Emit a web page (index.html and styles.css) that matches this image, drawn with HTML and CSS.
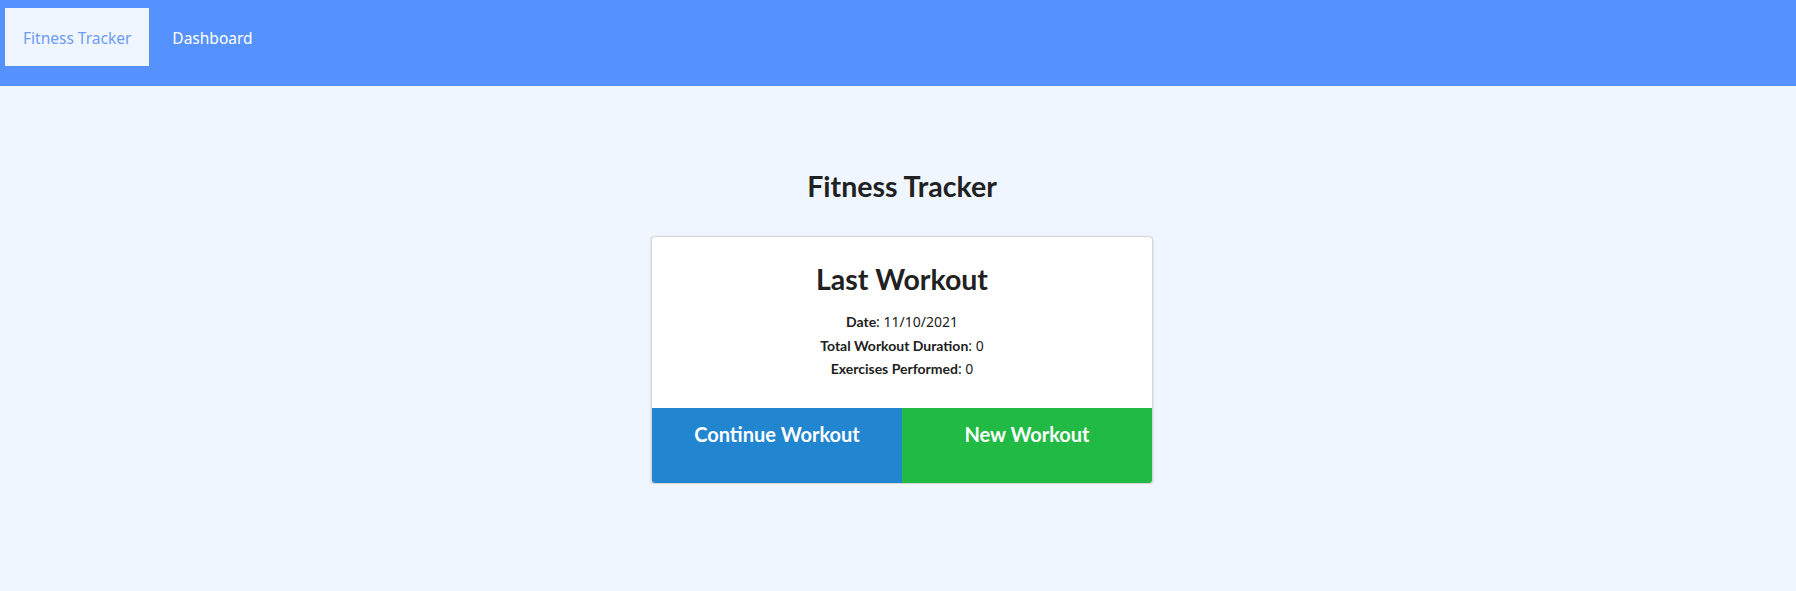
FILE: index.html
```html
<!DOCTYPE html>
<html lang="en">
<head>
<meta charset="utf-8">
<title>Fitness Tracker</title>
<link rel="stylesheet" href="styles.css">
</head>
<body>
<nav class="topnav">
  <a class="nav-link active" href="#">Fitness Tracker</a>
  <a class="nav-link" href="#">Dashboard</a>
</nav>
<main class="main">
  <h1 class="page-title">Fitness Tracker</h1>
  <div class="card">
    <div class="card-body">
      <h2 class="card-title">Last Workout</h2>
      <p class="info"><strong>Date</strong>: 11/10/2021</p>
      <p class="info"><strong>Total Workout Duration</strong>: 0</p>
      <p class="info"><strong>Exercises Performed</strong>: 0</p>
    </div>
    <div class="card-buttons">
      <a class="btn btn-blue" href="#">Continue Workout</a>
      <a class="btn btn-green" href="#">New Workout</a>
    </div>
  </div>
</main>
</body>
</html>
```
FILE: styles.css
```css
html, body {
  margin: 0;
  padding: 0;
}
body {
  background: #eff6ff;
  font-family: "Noto Sans", "Open Sans", sans-serif;
  color: #212121;
}
.topnav {
  background: #5592fe;
  height: 86px;
  box-sizing: border-box;
  padding: 8px 5px 0;
  display: flex;
  align-items: flex-start;
  gap: 5px;
}
.nav-link {
  height: 58px;
  box-sizing: border-box;
  padding: 2px 18px 0;
  display: flex;
  align-items: center;
  font-size: 15.5px;
  color: #ffffff;
  text-decoration: none;
}
.nav-link.active {
  background: #f0f6ff;
  color: #6d9bf6;
}
.main {
  display: flex;
  flex-direction: column;
  align-items: center;
  padding-left: 8px;
}
.page-title {
  font-family: Lato, sans-serif;
  font-weight: 700;
  font-size: 28.5px;
  margin: 80px 0 0;
  line-height: 40px;
}
.card {
  margin-top: 30px;
  width: 500px;
  background: #fff;
  border: 1px solid #d4d4d5;
  border-radius: 4px;
  box-shadow: 0 1px 3px 0 #d4d4d5;
  overflow: hidden;
}
.card-body {
  padding: 22px 16px 0;
  text-align: center;
  height: 171px;
  box-sizing: border-box;
}
.card-title {
  font-family: Lato, sans-serif;
  font-weight: 700;
  font-size: 28.5px;
  margin: 0 0 11px;
  line-height: 40px;
}
.info {
  margin: 0;
  font-size: 14px;
  line-height: 23.5px;
}
.info strong {
  font-family: Lato, sans-serif;
  font-weight: 700;
}
.card-buttons {
  display: flex;
  height: 75px;
}
.btn {
  flex: 1;
  text-align: center;
  font-family: Lato, sans-serif;
  font-weight: 700;
  font-size: 20px;
  color: #fff;
  text-decoration: none;
  padding-top: 14px;
  box-sizing: border-box;
}
.btn-blue {
  background: #2185d0;
}
.btn-green {
  background: #21ba45;
}
```
